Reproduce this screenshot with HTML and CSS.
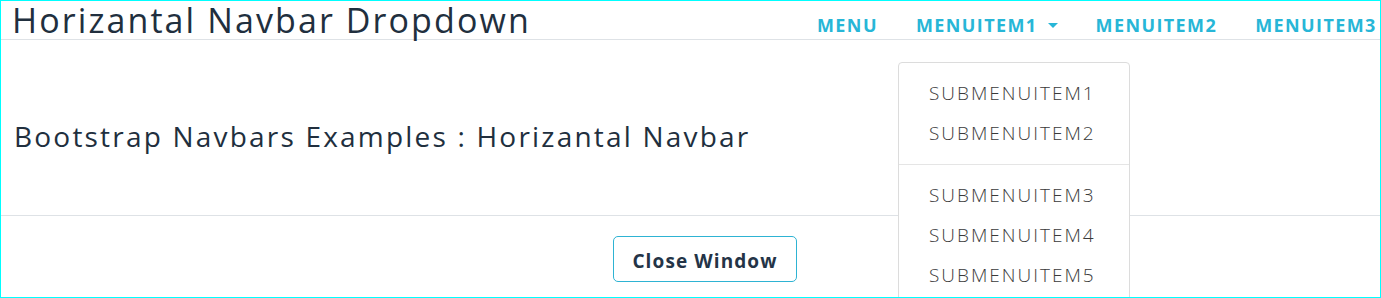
FILE: index.html
```html
<!DOCTYPE html>
<html lang="en">
<head>
<meta charset="utf-8">
<title>Horizantal Navbar Dropdown</title>
<link rel="stylesheet" href="styles.css">
</head>
<body>
<div class="frame">
  <header class="header">
    <h1 class="title">Horizantal Navbar Dropdown</h1>
    <nav class="nav">
      <a class="nav-link">MENU</a>
      <a class="nav-link dropdown-toggle">MENUITEM1<span class="caret"></span></a>
      <a class="nav-link">MENUITEM2</a>
      <a class="nav-link">MENUITEM3</a>
    </nav>
  </header>
  <main class="body">
    <h2 class="heading">Bootstrap Navbars Examples : Horizantal Navbar</h2>
  </main>
  <footer class="footer">
    <button class="btn">Close Window</button>
  </footer>
  <div class="dropdown-menu">
    <a class="dropdown-item">SUBMENUITEM1</a>
    <a class="dropdown-item">SUBMENUITEM2</a>
    <div class="divider"></div>
    <a class="dropdown-item">SUBMENUITEM3</a>
    <a class="dropdown-item">SUBMENUITEM4</a>
    <a class="dropdown-item">SUBMENUITEM5</a>
  </div>
</div>
</body>
</html>
```

FILE: styles.css
```css
* { box-sizing: border-box; }
html, body { margin: 0; padding: 0; background: #fff; }
body { font-family: "Open Sans", "Liberation Sans", sans-serif; }

.frame {
  position: relative;
  width: 1381px;
  height: 298px;
  border: 1px solid #00ffff;
  overflow: hidden;
  background: #fff;
}

.header {
  display: flex;
  height: 39px;
  border-bottom: 1px solid #dee2e6;
  padding-left: 11px;
  white-space: nowrap;
}
.title {
  margin: 0;
  flex: 0 0 805px;
  font-size: 34px;
  font-weight: 400;
  line-height: 38px;
  color: #212f3e;
  letter-spacing: 2.1px;
}
.nav {
  display: flex;
  gap: 38px;
  padding-top: 12px;
  flex: 0 0 auto;
}
.nav-link {
  display: flex;
  align-items: center;
  font-size: 18px;
  font-weight: 700;
  line-height: 24px;
  height: 24px;
  color: #27b6d7;
  letter-spacing: 1.4px;
}
.caret {
  display: inline-block;
  margin-left: 10px;
  width: 0;
  height: 0;
  border-left: 5px solid transparent;
  border-right: 5px solid transparent;
  border-top: 5px solid #27b6d7;
}

.body {
  height: 176px;
  padding: 79px 13px 0;
  border-bottom: 1px solid #dee2e6;
}
.heading {
  margin: 0;
  font-size: 28px;
  font-weight: 400;
  line-height: 34px;
  color: #212f3e;
  letter-spacing: 2.2px;
}

.footer {
  padding: 20px 0 0 612px;
}
.btn {
  width: 184px;
  height: 46px;
  border: 1px solid #2eb3d3;
  border-radius: 5px;
  background: #fff;
  font-family: "Open Sans", "Liberation Sans", sans-serif;
  font-size: 19px;
  font-weight: 700;
  color: #243447;
  letter-spacing: 1.1px;
  padding: 3px 0 0;
}

.dropdown-menu {
  position: absolute;
  left: 897px;
  top: 61px;
  width: 232px;
  padding: 10px 0;
  background: #fff;
  border: 1px solid #dcdcdc;
  border-radius: 4px;
}
.dropdown-item {
  display: block;
  padding-left: 30px;
  font-size: 19px;
  font-weight: 300;
  line-height: 40px;
  color: #3a3a3a;
  letter-spacing: 2px;
}
.divider {
  height: 1px;
  margin: 11px 0 10px;
  background: #e5e5e5;
}
```
